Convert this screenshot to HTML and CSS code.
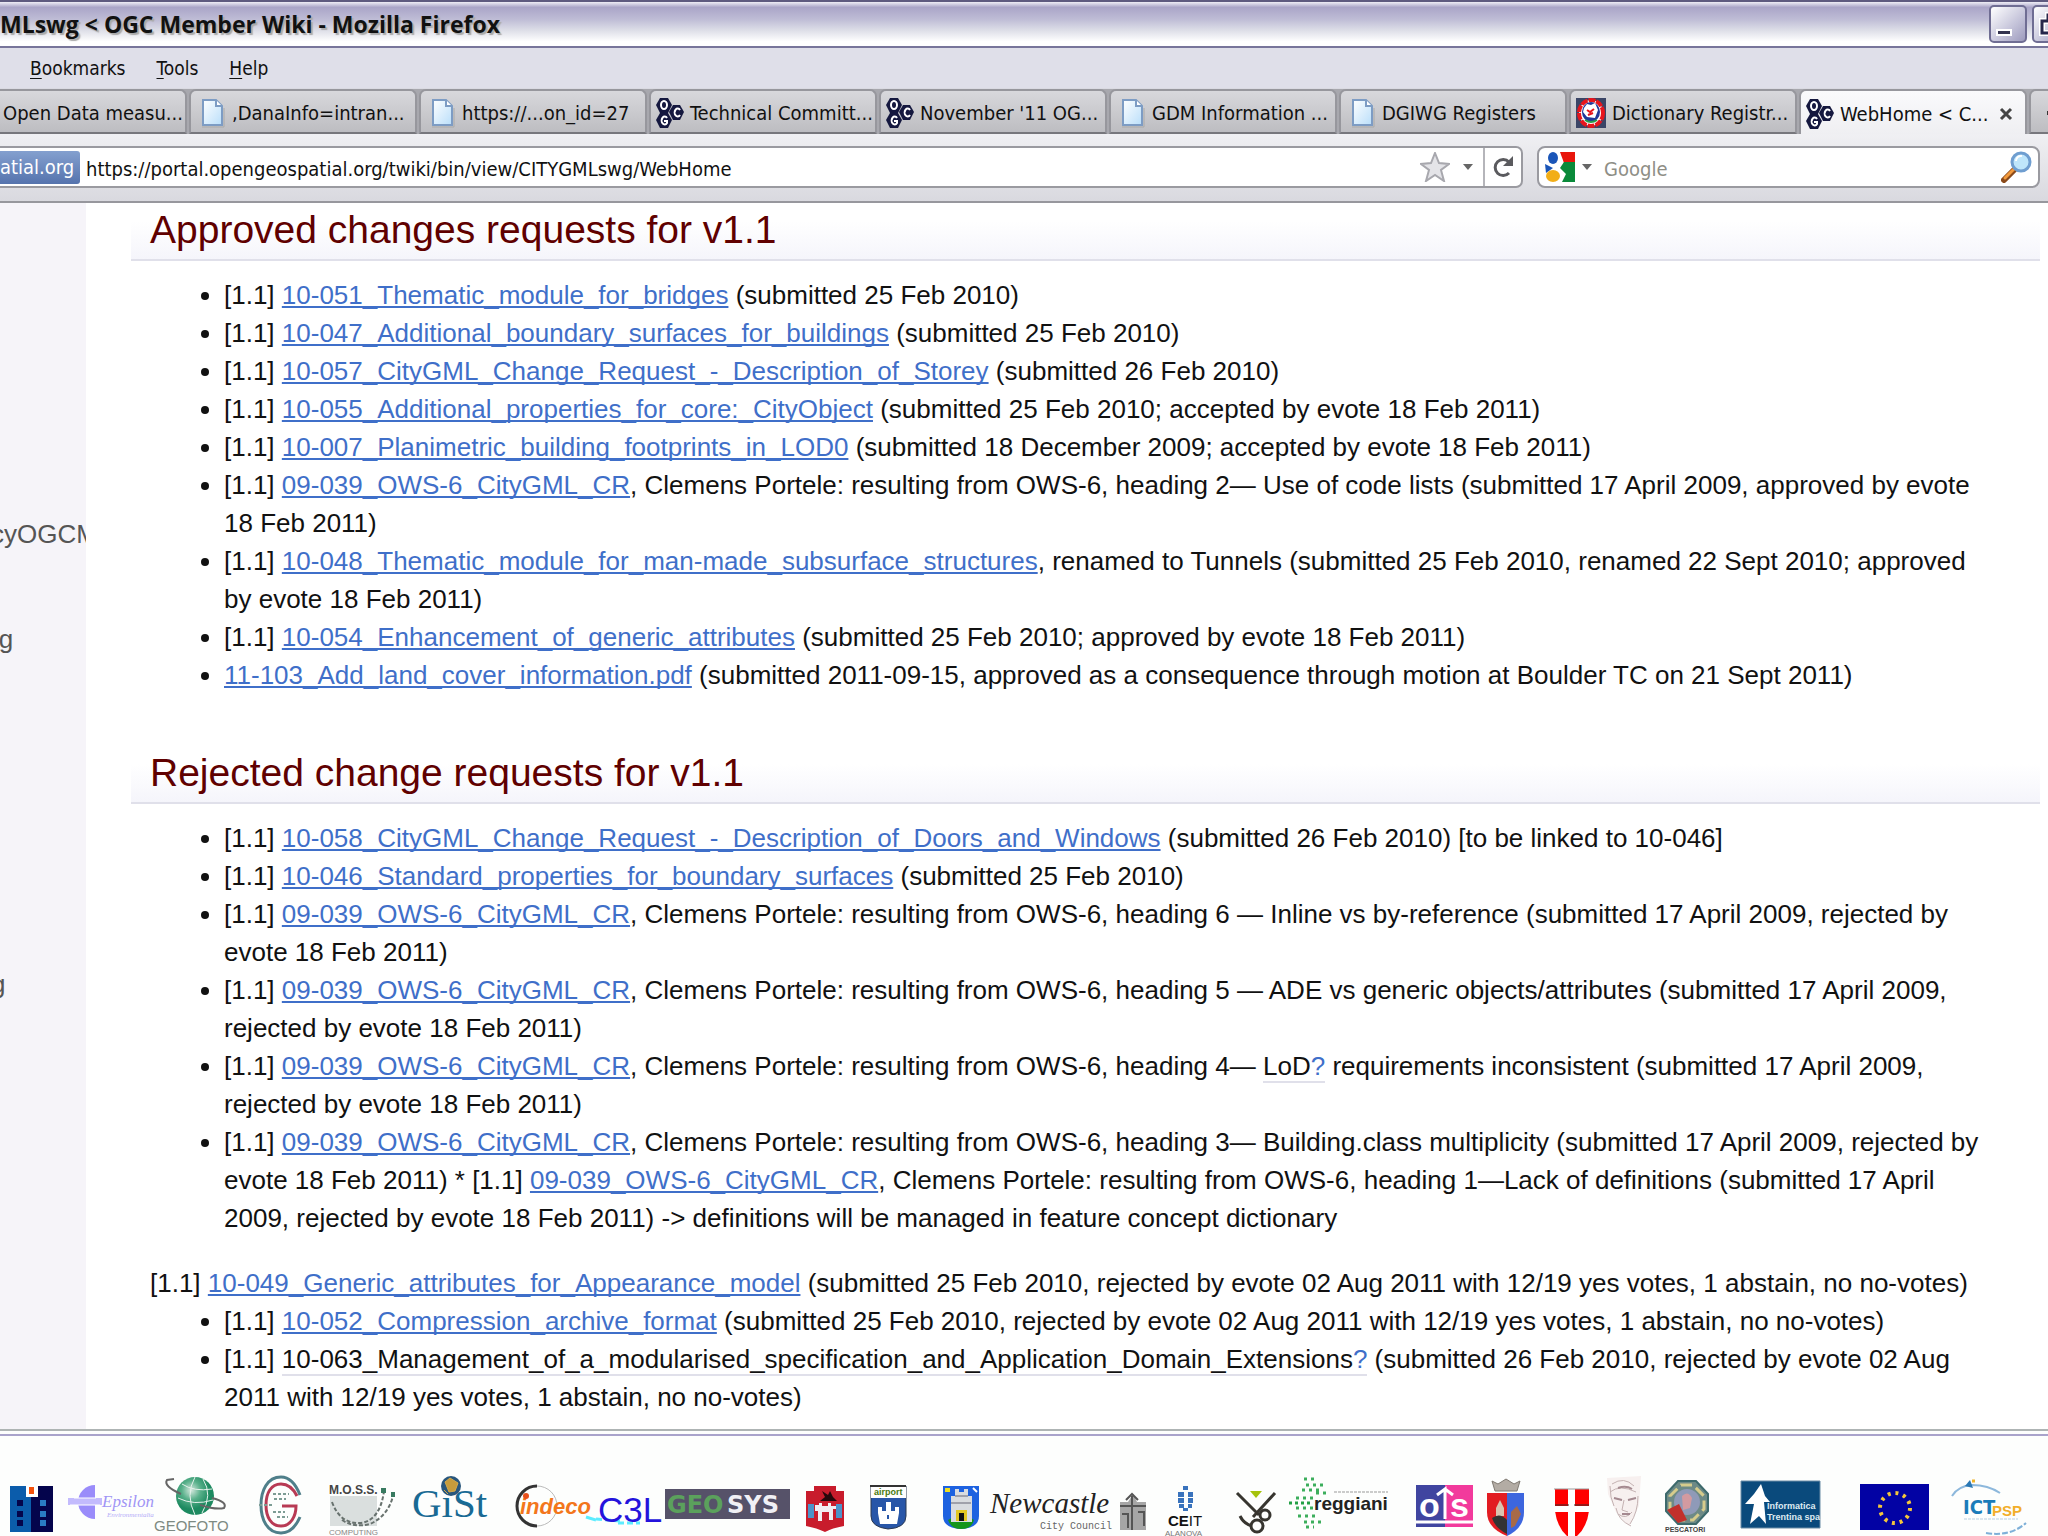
FILE: index.html
```
<!DOCTYPE html>
<html lang="en">
<head>
<meta charset="utf-8">
<title>CITYGMLswg &lt; OGC Member Wiki - Mozilla Firefox</title>
<link rel="stylesheet" href="styles.css">
</head>
<body>
<svg class="defs" aria-hidden="true">
  <defs>
    <linearGradient id="paper" x1="0" y1="0" x2="1" y2="1">
      <stop offset="0" stop-color="#fff"/><stop offset="1" stop-color="#b9defa"/>
    </linearGradient>
    <radialGradient id="globe" cx=".4" cy=".35">
      <stop offset="0" stop-color="#d5e8de"/><stop offset=".5" stop-color="#58b08a"/><stop offset="1" stop-color="#1d8a60"/>
    </radialGradient>
    <symbol id="page" viewBox="0 0 24 30">
      <path d="M2 2h13l6 6v19H2z" fill="url(#paper)" stroke="#7d9cc4" stroke-width="2"/>
      <path d="M15 2v6h6" fill="#fff" stroke="#7d9cc4" stroke-width="2"/>
      <path d="M1 29h22V10" fill="none" stroke="#aaa" stroke-width="1"/>
    </symbol>
    <symbol id="ogc" viewBox="0 0 28 30">
      <g fill="#15183f"><path d="M4 0h8l4 7-4 8H4L0 7z"/><path d="M17 7h7l4 7-4 8h-7l-4-8z"/><path d="M4 15h8l4 7-4 8H4l-4-8z"/></g>
      <g fill="none" stroke="#fff" stroke-width="2">
        <ellipse cx="8" cy="7" rx="3" ry="4"/>
        <path d="M24 12a3 4 0 1 0 0 5M11 20a3 4 0 1 0 0 5v-2H8"/>
      </g>
    </symbol>
  </defs>
</svg>

<div class="window">
  <header class="titlebar">
    <h1>MLswg &lt; OGC Member Wiki - Mozilla Firefox</h1>
    <div class="winbtns">
      <button aria-label="Minimize"><svg width="38" height="37"><rect x="6" y="23" width="14" height="5" fill="#33334f" stroke="#fff" stroke-width="2"/></svg></button>
      <button aria-label="Maximize"><svg width="38" height="37"><path d="M8 14h14v12H8zM14 14V8h14v12h-6" fill="none" stroke="#fff" stroke-width="6"/><path d="M8 14h14v12H8zM14 14V8h14v12h-6" fill="none" stroke="#26264a" stroke-width="3"/></svg></button>
    </div>
  </header>

  <nav class="menu">
    <a href="#"><u>B</u>ookmarks</a>
    <a href="#"><u>T</u>ools</a>
    <a href="#"><u>H</u>elp</a>
  </nav>

  <div class="tabs">
    <button class="tab first"><span>Open Data measu...</span></button>
    <button class="tab"><svg width="24" height="30"><use href="#page"/></svg><span>,DanaInfo=intran...</span></button>
    <button class="tab"><svg width="24" height="30"><use href="#page"/></svg><span>https://...on_id=27</span></button>
    <button class="tab site-icon"><svg width="28" height="30"><use href="#ogc"/></svg><span>Technical Committ...</span></button>
    <button class="tab site-icon"><svg width="28" height="30"><use href="#ogc"/></svg><span>November '11 OG...</span></button>
    <button class="tab"><svg width="24" height="30"><use href="#page"/></svg><span>GDM Information ...</span></button>
    <button class="tab"><svg width="24" height="30"><use href="#page"/></svg><span>DGIWG Registers</span></button>
    <button class="tab site-icon"><svg width="30" height="30" viewBox="0 0 30 30"><rect width="30" height="30" fill="#3b4566"/><ellipse cx="15" cy="15" rx="12" ry="13" fill="#fff" stroke="#e8141c" stroke-width="4" stroke-dasharray="7 1"/><ellipse cx="15" cy="14" rx="9" ry="10" fill="#20389a"/><path d="M8 10l3-4 4 1 4-2 3 7-3 8-8-1-4-5z" fill="#fff"/><path d="M11 12l3 2 4-3M12 17l5-2" stroke="#e8141c" stroke-width="2" fill="none"/><path d="M9 22q6 4 12 0" stroke="#2a9a4a" stroke-width="2" fill="none"/></svg><span>Dictionary Registr...</span></button>
    <button class="tab site-icon active"><svg width="28" height="30"><use href="#ogc"/></svg><span>WebHome &lt; C...</span><svg class="x" width="14" height="14" viewBox="0 0 14 14"><path d="M2 2l10 10M12 2L2 12" stroke="#444" stroke-width="3"/></svg></button>
    <button class="tab last" aria-label="Next tab"><svg width="8" height="8"><rect width="6" height="4" y="2" fill="#333"/></svg></button>
  </div>

  <div class="toolbar">
    <div class="urlbar">
      <span class="site">atial.org</span>
      <input aria-label="Address" value="https://portal.opengeospatial.org/twiki/bin/view/CITYGMLswg/WebHome">
      <svg width="30" height="30" viewBox="0 0 30 30"><path d="M15 1l4 10 10 1-8 6 3 11-9-6-9 6 3-11-8-6 10-1z" fill="#e4e4e8" stroke="#a8a8ae" stroke-width="2"/></svg>
      <svg class="drop" width="10" height="6"><path d="M0 0h10L5 6z" fill="#666"/></svg>
      <button class="reload" aria-label="Reload"><svg width="22" height="22" viewBox="0 0 22 22"><path d="M17 6a8 8 0 1 0 0 11" fill="none" stroke="#5a5a5e" stroke-width="3"/><path d="M21 0v10H11z" fill="#5a5a5e"/></svg></button>
    </div>
    <div class="search">
      <svg width="30" height="30" viewBox="0 0 30 30"><path d="M15 0h15v11H19z" fill="#e8160c"/><path d="M19 10h11v20H17l4-8-6-6z" fill="#0a8a3a"/><ellipse cx="8" cy="6" rx="5" ry="6" fill="#1a55b8"/><path d="M0 12l8 4-7 5z" fill="#1a55b8"/><ellipse cx="8" cy="24" rx="7" ry="6" fill="#f2ae18"/></svg>
      <svg class="drop" width="10" height="6"><path d="M0 0h10L5 6z" fill="#666"/></svg>
      <input aria-label="Search" placeholder="Google">
      <svg width="32" height="32" viewBox="0 0 32 32"><path d="M13 19L3 29" stroke="#8a4a1a" stroke-width="6" stroke-linecap="round"/><path d="M13 18L4 27" stroke="#f39a3c" stroke-width="3" stroke-linecap="round"/><circle cx="20" cy="11" r="9" fill="#bfe6fb" stroke="#6f9ed0" stroke-width="3"/><path d="M15 10a5 5 0 0 1 6-5" stroke="#fff" stroke-width="2" fill="none"/></svg>
    </div>
  </div>

  <div class="page">
    <aside>
      <p>cyOGCM</p>
      <p class="g1">wg</p>
      <p class="g2">g</p>
    </aside>
    <main>
      <h2>Approved changes requests for v1.1</h2>
      <ul>
        <li>[1.1] <a href="#">10-051_Thematic_module_for_bridges</a> (submitted 25 Feb 2010)</li>
        <li>[1.1] <a href="#">10-047_Additional_boundary_surfaces_for_buildings</a> (submitted 25 Feb 2010)</li>
        <li>[1.1] <a href="#">10-057_CityGML_Change_Request_-_Description_of_Storey</a> (submitted 26 Feb 2010)</li>
        <li>[1.1] <a href="#">10-055_Additional_properties_for_core:_CityObject</a> (submitted 25 Feb 2010; accepted by evote 18 Feb 2011)</li>
        <li>[1.1] <a href="#">10-007_Planimetric_building_footprints_in_LOD0</a> (submitted 18 December 2009; accepted by evote 18 Feb 2011)</li>
        <li>[1.1] <a href="#">09-039_OWS-6_CityGML_CR</a>, Clemens Portele: resulting from OWS-6, heading 2— Use of code lists (submitted 17 April 2009, approved by evote 18 Feb 2011)</li>
        <li>[1.1] <a href="#">10-048_Thematic_module_for_man-made_subsurface_structures</a>, renamed to Tunnels (submitted 25 Feb 2010, renamed 22 Sept 2010; approved by evote 18 Feb 2011)</li>
        <li>[1.1] <a href="#">10-054_Enhancement_of_generic_attributes</a> (submitted 25 Feb 2010; approved by evote 18 Feb 2011)</li>
        <li><a href="#">11-103_Add_land_cover_information.pdf</a> (submitted 2011-09-15, approved as a consequence through motion at Boulder TC on 21 Sept 2011)</li>
      </ul>

      <h2>Rejected change requests for v1.1</h2>
      <ul>
        <li>[1.1] <a href="#">10-058_CityGML_Change_Request_-_Description_of_Doors_and_Windows</a> (submitted 26 Feb 2010) [to be linked to 10-046]</li>
        <li>[1.1] <a href="#">10-046_Standard_properties_for_boundary_surfaces</a> (submitted 25 Feb 2010)</li>
        <li>[1.1] <a href="#">09-039_OWS-6_CityGML_CR</a>, Clemens Portele: resulting from OWS-6, heading 6 — Inline vs by-reference (submitted 17 April 2009, rejected by evote 18 Feb 2011)</li>
        <li>[1.1] <a href="#">09-039_OWS-6_CityGML_CR</a>, Clemens Portele: resulting from OWS-6, heading 5 — ADE vs generic objects/attributes (submitted 17 April 2009, rejected by evote 18 Feb 2011)</li>
        <li>[1.1] <a href="#">09-039_OWS-6_CityGML_CR</a>, Clemens Portele: resulting from OWS-6, heading 4— <span class="new">LoD<a href="#">?</a></span> requirements inconsistent (submitted 17 April 2009, rejected by evote 18 Feb 2011)</li>
        <li>[1.1] <a href="#">09-039_OWS-6_CityGML_CR</a>, Clemens Portele: resulting from OWS-6, heading 3— Building.class multiplicity (submitted 17 April 2009, rejected by evote 18 Feb 2011) * [1.1] <a href="#">09-039_OWS-6_CityGML_CR</a>, Clemens Portele: resulting from OWS-6, heading 1—Lack of definitions (submitted 17 April 2009, rejected by evote 18 Feb 2011) -&gt; definitions will be managed in feature concept dictionary</li>
      </ul>
      <p>[1.1] <a href="#">10-049_Generic_attributes_for_Appearance_model</a> (submitted 25 Feb 2010, rejected by evote 02 Aug 2011 with 12/19 yes votes, 1 abstain, no no-votes)</p>
      <ul>
        <li>[1.1] <a href="#">10-052_Compression_archive_format</a> (submitted 25 Feb 2010, rejected by evote 02 Aug 2011 with 12/19 yes votes, 1 abstain, no no-votes)</li>
        <li>[1.1] <span class="new">10-063_Management_of_a_modularised_specification_and_Application_Domain_Extensions<a href="#">?</a></span> (submitted 26 Feb 2010, rejected by evote 02 Aug 2011 with 12/19 yes votes, 1 abstain, no no-votes)</li>
      </ul>
    </main>
  </div>
</div>

<footer class="partners">
  <!-- building -->
  <svg width="62" height="100" viewBox="0 0 62 100">
    <path d="M10 50h21v46H10z" fill="#0b5cab"/><path d="M31 50h22v46H31z" fill="#04044c"/>
    <path d="M26 49h12v12H26z" fill="#fff"/><path d="M29 51h5v7h-5z" fill="#f4510b"/>
    <path d="M17 64h6v6h-6zM17 75h6v6h-6zM17 84h6v6h-6z" fill="#04044c"/><path d="M40 64h6v6h-6zM40 75h6v6h-6zM40 84h6v6h-6z" fill="#2a7cc4"/>
  </svg>
  <!-- epsilon -->
  <svg width="92" height="100" viewBox="62 0 92 100">
    <path d="M95 49a17 17 0 0 0 0 34z" fill="#9a8cfa"/>
    <path d="M68 62h34v7H68z" fill="#c3bbfd"/><path d="M74 62h22M70 69h30" stroke="#fff"/>
    <text x="102" y="71" class="serif it" font-size="17" fill="#a095f5">Epsilon</text>
    <text x="107" y="81" class="serif it" font-size="7" fill="#b4acf8">Environmentalia</text>
  </svg>
  <!-- geofoto -->
  <svg width="92" height="100" viewBox="154 0 92 100">
    <circle cx="195" cy="60" r="19" fill="url(#globe)"/>
    <path d="M182 48q12 8 30 5M178 62q16 8 35 2M195 41q-10 18 0 38M203 43q10 16-1 34" stroke="#e6f2ec" fill="none"/>
    <path d="M181 58q-18-8-14-14l7-1M212 62q16 4 12 10-8 2-24-3" stroke="#666" stroke-width="2" fill="none"/>
    <text x="154" y="95" font-size="15" fill="#7d8a82" class="sans">GEOFOTO</text>
  </svg>
  <!-- G -->
  <svg width="66" height="100" viewBox="246 0 66 100">
    <path d="M300 59q-7-18-19-18c-14 0-20 14-20 28s6 28 20 28q12 0 19-16" fill="none" stroke="#4f7f8a" stroke-width="3"/>
    <path d="M297 60q-6-12-16-12c-10 0-15 9-15 21s5 21 15 21 15-10 15-20h-14" fill="none" stroke="#b83a54" stroke-width="3"/>
    <path d="M259 69h13M273 58h16M274 63h12M273 76h12M277 81h11" stroke="#7c9c94" stroke-width="2" stroke-dasharray="3 2"/>
  </svg>
  <!-- moss -->
  <svg width="90" height="100" viewBox="312 0 90 100">
    <path d="M330 60h47v30h-47z" fill="#dadfde"/>
    <text x="329" y="58" font-size="12" font-weight="700" class="sans" fill="#444">M.O.S.S.</text>
    <path d="M332 66q8 22 28 21 20-2 24-32M342 84q12 8 28 4 18-8 23-28" fill="none" stroke="#68726e" stroke-width="2" stroke-dasharray="4 2"/>
    <path d="M381 52h5v5h-5zM391 56h4v5h-4z" fill="#387a60"/>
    <text x="329" y="99" font-size="8" class="sans" fill="#888">COMPUTING</text>
  </svg>
  <!-- GiSt -->
  <svg width="100" height="100" viewBox="402 0 100 100">
    <text x="412" y="81" font-size="41" class="serif" fill="#196a94">GıSt</text>
    <circle cx="451" cy="50" r="10" fill="#28567c"/><path d="M445 46l5-4 8 5-3 8-6 1-2-5zM444 54l4 4" fill="#c69b3c" stroke="#d2a94e"/>
  </svg>
  <!-- indeco -->
  <svg width="94" height="100" viewBox="502 0 94 100">
    <circle cx="537" cy="70" r="20" fill="none" stroke="#bbb"/><path d="M537 50a20 20 0 0 0 0 40" fill="none" stroke="#333" stroke-width="3"/>
    <text x="520" y="78" font-size="22" font-weight="700" class="sans it" fill="#f3761b">indeco</text>
    <circle cx="526" cy="60" r="3" fill="#e8501b"/><path d="M586 81l10 3" stroke="#5cecff" stroke-width="3"/>
  </svg>
  <svg width="66" height="100" viewBox="596 0 66 100">
    <path d="M596 83l24 2M618 87h22" stroke="#5cecff" stroke-width="3" stroke-dasharray="6 3"/>
    <text x="598" y="86" font-size="35" class="sans" fill="#2413dc">C3L</text>
  </svg>
  <!-- geosys -->
  <svg width="136" height="100" viewBox="662 0 136 100">
    <path d="M665 53h125v30H665z" fill="#565269"/>
    <text x="667" y="77" font-size="24" font-weight="700" class="wide" fill="#5ba15c">GEO</text><text x="727" y="77" font-size="24" font-weight="700" class="wide" fill="#f0f0f5">SYS</text>
  </svg>
  <!-- coats of arms -->
  <svg width="60" height="100" viewBox="798 0 60 100">
    <path d="M814 50h22v5h8v35q-12 2-19 6-8-4-19-6V55h8z" fill="#c81c2c"/>
    <path d="M820 65l5-4-3-6 6 4 2-4 3 6 4 4z" fill="#26080c"/><path d="M815 69h4v-2h3v3h6v-3h3v3h5v3h-3v11h-4V76h-7v9h-4V75h-3z" fill="#f1eef2"/><path d="M808 68h6v14h-6zM836 68h6v14h-6z" fill="#4b93c8"/>
  </svg>
  <svg width="67" height="100" viewBox="858 0 67 100">
    <path d="M871 50h35v30q0 12-18 13-17-2-17-13z" fill="#2856a8" stroke="#2b3850"/>
    <path d="M871 50h35v12h-35z" fill="#fff"/><path d="M870 50h36" stroke="#333" stroke-width="2"/>
    <text x="874" y="59" font-size="9" font-weight="700" class="sans" fill="#4a7a10">airport</text>
    <path d="M878 71h4v4h4v-9h5v9h4v-4h4v6l-2 11h-17l-2-11z" fill="#fff"/><path d="M887 79h2v4h-2z" fill="#2856a8"/>
  </svg>
  <svg width="60" height="100" viewBox="925 0 60 100">
    <path d="M943 50h36v30q0 12-18 13-18-1-18-13z" fill="#1d62e0"/><path d="M948 84q14-8 26 0-2 9-13 9-10 0-13-9z" fill="#15951a"/>
    <path d="M951 60h4v-7h4v3h5v-3h4v7h4v26h-21z" fill="#d9dce0"/><path d="M956 74h11v11h-11z" fill="#e3c721"/><path d="M959 77h5v8h-5z" fill="#111"/>
    <path d="M951 67h20M955 60h13" stroke="#667"/><path d="M945 52h5v4h-5z" fill="#f0e020"/><path d="M973 52l4 4" stroke="#fff" stroke-width="2"/>
  </svg>
  <!-- newcastle -->
  <svg width="170" height="100" viewBox="985 0 170 100">
    <text x="990" y="77" font-size="29" class="serif it" fill="#222">Newcastle</text>
    <text x="1040" y="93" class="mono" fill="#666">City Council</text>
    <path d="M1120 66h8l5-8 4 8h9v28h-26z" fill="#a6a6a6"/><path d="M1120 70h26M1122 78h6v14M1132 60v34M1138 76h6v14M1126 64l6-6 6 6" stroke="#555" stroke-width="2" fill="none"/>
  </svg>
  <svg width="65" height="100" viewBox="1155 0 65 100">
    <g fill="#3973bd"><path d="M1183 50h5v4h-5zM1178 56h6v5h-6zM1188 56h5v5h-5zM1178 62h6v5h-6zM1188 62h5v5h-5zM1179 68h5v4h-5zM1188 68h4v4h-4zM1183 72h5v3h-5z"/></g>
    <text x="1168" y="90" font-size="15" class="sans" fill="#111"><tspan font-weight="700">CE</tspan>IT</text>
    <text x="1165" y="100" font-size="8" class="sans" fill="#777">ALANOVA</text>
  </svg>
  <svg width="64" height="100" viewBox="1220 0 64 100">
    <path d="M1250 55h12l-6 7z" fill="#a6c30c"/>
    <g fill="none" stroke="#37352f" stroke-width="3"><path d="M1237 57l22 22M1275 57l-22 24"/><circle cx="1257" cy="90" r="6"/><circle cx="1265" cy="79" r="5"/><path d="M1240 80q4 8 12 10"/></g>
  </svg>
  <!-- reggiani -->
  <svg width="116" height="100" viewBox="1284 0 116 100">
    <path d="M1289 67h24" stroke="#22a045" stroke-width="3" stroke-dasharray="3 3"/>
    <path d="M1296 62h18M1296 72h18M1302 54h18M1306 49h20M1304 43h10M1298 80h20M1304 86h20M1306 91h8M1316 57h10" stroke="#3cae5c" stroke-width="3" stroke-dasharray="3 4"/>
    <path d="M1334 56h54" stroke="#999" stroke-dasharray="3 1"/>
    <text x="1314" y="74" font-size="19" font-weight="700" class="sans" fill="#222">reggiani</text>
  </svg>
  <!-- ois -->
  <svg width="80" height="100" viewBox="1400 0 80 100">
    <path d="M1416 49h29v42h-29z" fill="#4045a0"/><path d="M1445 49h28v42h-28z" fill="#f23a9c"/>
    <text x="1419" y="81" font-size="34" font-weight="700" class="sans" fill="#fff">o</text><text x="1450" y="81" font-size="34" font-weight="700" class="sans" fill="#fff">s</text>
    <path d="M1445 83V53l-8 6M1445 53l8 6M1416 86h57" fill="none" stroke="#fff" stroke-width="3"/>
  </svg>
  <svg width="61" height="100" viewBox="1480 0 61 100">
    <path d="M1492 45l6 3 8-5 8 5 6-3-3 10h-22z" fill="#b3aca4" stroke="#807a72"/>
    <path d="M1487 57h20v43q-20-8-20-24z" fill="#e21c22"/><path d="M1507 57h17v19q0 16-17 24z" fill="#3d66de"/>
    <path d="M1496 72l4-8 4 8v8h-8z" fill="#d9c3b0"/><path d="M1492 82q8-6 15 2v14q-12-6-15-16z" fill="#333"/><path d="M1511 76l6-6 4 8-6 12-4 2z" fill="#a86a48"/>
  </svg>
  <svg width="59" height="100" viewBox="1538 0 59 100">
    <path d="M1552 53h34v22q-2 16-12 25h-10q-10-9-12-25z" fill="#f00"/><path d="M1565 52h7v48h-7zM1551 70h36v6h-36z" fill="#fff"/><path d="M1551 53h35" stroke="#999"/><path d="M1552 69h14M1571 69h15" stroke="#333"/>
  </svg>
  <svg width="55" height="100" viewBox="1594 0 55 100">
    <path d="M1601 42l34-2-2 30-10 20-13-14-8-18z" fill="#f7f0ef"/>
    <path d="M1606 48q12-8 22 2M1604 56q10-8 26 0M1608 62l8 2M1622 64l8-2M1618 64l-2 10 6 2M1612 78q8 6 14-2M1610 72q2 12 15 18M1632 60q0 16-8 28M1604 50q0 12 4 20" fill="none" stroke="#c4b2b2"/>
    <path d="M1612 52q8-3 14 1M1608 62l8 2M1622 64l8-2M1616 78h8" stroke="#a58a90" stroke-width="2" fill="none"/>
  </svg>
  <svg width="70" height="100" viewBox="1646 0 70 100">
    <path d="M1669 45h18l12 13v17l-12 13h-18l-12-13V58z" fill="#6d8a86" stroke="#3d6a6c" stroke-width="2"/>
    <path d="M1672 49h12l11 11v13l-11 11h-12l-11-11V60z" fill="none" stroke="#d6cc8c" stroke-width="3" stroke-dasharray="11 5"/>
    <circle cx="1678" cy="66" r="13" fill="#8f9ab8"/><path d="M1658 74l12-6 8 16-9 3z" fill="#c2302c"/><path d="M1673 60q6-6 10 2l-2 10-7 2z" fill="#d39aa0"/>
    <text x="1656" y="96" font-size="7" font-weight="700" class="sans" fill="#444">PESCATORI</text>
  </svg>
  <svg width="115" height="100" viewBox="1713 0 115 100">
    <path d="M1729 45h79v47h-79z" fill="#0a4a7c" stroke="#6a8ca6"/>
    <path d="M1749 48l4 12 5 6h-6l2 22-7-8-9 8 4-20h-9l9-10z" fill="#fff"/>
    <text x="1755" y="73" font-size="9" font-weight="700" class="sans" fill="#dfeaf2">Informatica</text>
    <text x="1755" y="84" font-size="9" font-weight="700" class="sans" fill="#dfeaf2">Trentina spa</text>
  </svg>
  <svg width="100" height="100" viewBox="1823 0 100 100">
    <path d="M1843 48h69v46h-69z" fill="#0202a4"/>
    <circle cx="1878" cy="72" r="15" fill="none" stroke="#f4c63c" stroke-width="4" stroke-dasharray="3 4.854"/>
  </svg>
  <svg width="108" height="100" viewBox="1918 0 108 100">
    <path d="M1930 60q6-10 20-11 16 0 28 8" fill="none" stroke="#8db8dc" stroke-width="2"/><path d="M1943 50l5-6 3 8z" fill="#2a78b4"/><path d="M1950 45h3" stroke="#f0b428" stroke-width="3"/>
    <text x="1941" y="78" font-size="20" font-weight="700" class="narrow" fill="#1b7cba">ICT</text>
    <text x="1970" y="80" font-size="15" font-weight="700" class="sans" fill="#f2ae2a">PSP</text>
    <path d="M1942 83h54" stroke="#b9cfe0" stroke-dasharray="3 1"/><path d="M1964 97q24 4 40-10" fill="none" stroke="#7eb0d8" stroke-width="2" stroke-dasharray="6 2"/>
  </svg>
</footer>
</body>
</html>
```
FILE: styles.css
```
* {
  box-sizing: border-box;
}
body {
  margin: 0;
  min-height: 100vh;
  display: flex;
  flex-direction: column;
  background: #fdfefd;
  overflow-x: hidden;
  font-family: "DejaVu Sans Condensed", "DejaVu Sans", sans-serif;
  font-size: 20px;
  color: #111;
}
button, input {
  font: inherit;
  color: inherit;
  border: 0;
  padding: 0;
  background: none;
}
svg {
  flex: none;
  display: block;
}
.defs {
  position: absolute;
  width: 0;
  height: 0;
}
.window {
  flex: 1;
  display: flex;
  flex-direction: column;
  border-bottom: 2px solid #a9a3cb;
}

/* title bar and menu */
.titlebar {
  height: 48px;
  display: flex;
  align-items: center;
  justify-content: space-between;
  overflow: hidden;
  border-top: 2px solid #5f5b80;
  border-bottom: 2px solid #77759a;
  background: linear-gradient(#efeef6, #aaa5c8 12%, #bfbdd6 40%, #dedfe8 65%, #fff 90%);
}
.titlebar h1 {
  margin: 0;
  font: bold 23px/44px "Open Sans", sans-serif;
  white-space: nowrap;
  text-shadow: 2px 2px 1px #aaa;
}
.winbtns {
  display: flex;
  gap: 5px;
  margin-right: -22px;
}
.winbtns button {
  width: 38px;
  height: 38px;
  border: 2px solid #6f6d93;
  border-radius: 5px;
  background: linear-gradient(135deg, #fff, #c5c4da 60%, #9d9bbd);
  overflow: hidden;
}
.menu {
  height: 40px;
  display: flex;
  align-items: center;
  gap: 31px;
  padding-left: 30px;
  background: #dfdfe9;
  font-size: 19px;
}
.menu a {
  color: #111;
  text-decoration: none;
}
.menu u {
  text-underline-offset: 3px;
}

/* tabs */
.tabs {
  height: 46px;
  display: flex;
  gap: 2px;
  overflow: hidden;
  background: #a8a8ae;
  border-top: 1px solid #dadae2;
}
.tab {
  flex: none;
  width: 228px;
  display: flex;
  align-items: center;
  gap: 7px;
  padding: 3px 0 0 10px;
  border: 2px solid #97979d;
  border-bottom-color: #77777c;
  border-radius: 7px 7px 0 0;
  background: linear-gradient(#d8d8dc, #bdbdc1);
  white-space: nowrap;
  overflow: hidden;
}
.tab.first {
  width: 187px;
  padding-left: 3px;
  border-left: 0;
  border-top-left-radius: 0;
}
.tab.site-icon {
  gap: 6px;
  padding-left: 5px;
}
.tab.active {
  border-bottom: 0;
  background: linear-gradient(#fafafc, #efeff2);
}
.tab .x {
  margin-left: auto;
  margin-right: 12px;
}
.tab.last {
  padding-left: 16px;
}

/* address and search */
.toolbar {
  height: 69px;
  display: flex;
  gap: 14px;
  padding: 12px 8px 13px 0;
  border-bottom: 2px solid #97979d;
  background: linear-gradient(#f0f0f3, #d9d9df);
}
.urlbar, .search {
  display: flex;
  align-items: center;
  border: 2px solid #9a9aa0;
  background: #fff;
}
.urlbar {
  flex: 1;
  border-left: 0;
  border-radius: 0 7px 7px 0;
}
.urlbar input, .search input {
  flex: 1;
  min-width: 0;
  padding-top: 4px;
}
.site {
  width: 80px;
  line-height: 33px;
  margin-right: 6px;
  border-radius: 0 3px 3px 0;
  background: linear-gradient(#84a0cf, #5573ad);
  color: #fff;
}
.urlbar .drop {
  margin: 0 10px 0 13px;
}
.reload {
  height: 100%;
  width: 38px;
  display: flex;
  align-items: center;
  justify-content: center;
  border-left: 2px solid #b5b5ba;
}
.search {
  width: 503px;
  padding: 0 5px 0 6px;
  border-radius: 8px;
}
.search .drop {
  margin: 0 12px 0 7px;
}
.search input::placeholder {
  color: #8e8e86;
  opacity: 1;
}

/* wiki page */
.page {
  flex: 1;
  display: flex;
  background: #fff;
  border-bottom: 2px solid #aeb4b4;
  margin-bottom: 3px;
  font-family: "Liberation Sans", Arial, sans-serif;
  font-size: 26px;
  line-height: 38px;
}
aside {
  width: 86px;
  flex: none;
  padding-top: 312px;
  overflow: hidden;
  background: #f6f4f9;
  color: #555;
}
aside p {
  margin: 0 0 0 -9px;
}
aside .g1 {
  margin: 67px 0 0 -20px;
}
aside .g2 {
  margin: 307px 0 0 -9px;
}
main {
  flex: 1;
  padding: 2px 8px 0 45px;
}
h2 {
  height: 56px;
  margin: 0 0 15px;
  padding: 0 19px;
  border-bottom: 2px solid #e0e0ea;
  background: linear-gradient(#fff 30%, #f5f5fb);
  color: #600000;
  font-size: 39px;
  font-weight: normal;
  line-height: 50px;
}
ul + h2 {
  margin-top: 54px;
}
ul {
  margin: 0;
  padding: 0 45px 0 93px;
}
main p {
  margin: 27px 0 0;
  padding: 0 19px;
}
main a {
  color: #3f6fc9;
  text-decoration-thickness: 2px;
  text-underline-offset: 2px;
  text-decoration-skip-ink: none;
}
.new {
  border-bottom: 2px solid #e0e0ea;
}
.new a {
  text-decoration: none;
}

/* partner logos */
.partners {
  height: 100px;
  display: flex;
  justify-content: space-between;
  overflow: hidden;
}
.sans {
  font-family: "Liberation Sans", sans-serif;
}
.serif {
  font-family: "Liberation Serif", serif;
}
.mono {
  font-family: "Liberation Mono", monospace;
  font-size: 10px;
}
.wide {
  font-family: "DejaVu Sans", sans-serif;
}
.narrow {
  font-family: "DejaVu Sans Condensed", sans-serif;
}
.it {
  font-style: italic;
}
```
